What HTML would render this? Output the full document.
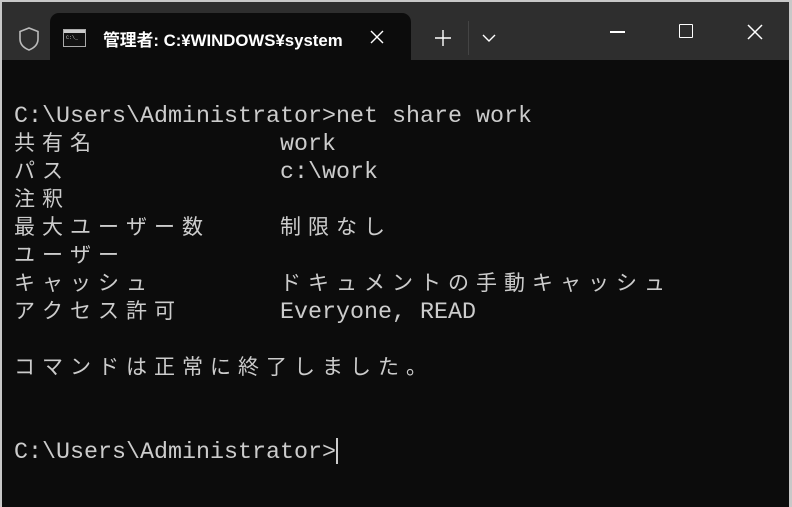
<!DOCTYPE html>
<html><head><meta charset="utf-8"><style>
html,body{margin:0;padding:0;width:792px;height:507px;overflow:hidden;background:#c8c8c8}
.win{position:absolute;left:2px;top:2px;width:787px;height:505px;background:#0c0c0c}
.title{position:absolute;left:0;top:0;width:787px;height:58px;background:#2e2e2e}
.tab{position:absolute;left:48px;top:11px;width:361px;height:49px;background:#0c0c0c;border-radius:9px 9px 0 0}
.tt{position:absolute;left:101px;top:25px;color:#fff;font:600 16.8px "Liberation Sans","Noto Sans CJK JP",sans-serif;white-space:nowrap}
.term{position:absolute;left:14px;top:103px;color:#cccccc;font:23.33px/28px "Liberation Mono","Noto Sans CJK JP",monospace}
.term div{height:28px;white-space:pre}
.term i{font-style:normal;display:inline-block;width:28px;font-size:21px}
.cur{position:absolute;left:336px;top:438px;width:1.5px;height:26px;background:#ccc}
</style></head><body>
<div class="win">
<div class="title"></div>
<svg style="position:absolute;left:15px;top:24px" width="24" height="26" viewBox="0 0 24 26"><path d="M12 2 L21 5.5 V13 C21 19 17 22 12 24 C7 22 3 19 3 13 V5.5 Z" fill="none" stroke="#bbb" stroke-width="1.6"/></svg>
<div class="tab"></div>
<svg style="position:absolute;left:61px;top:27px" width="24" height="19"><rect x="0.5" y="0.5" width="22" height="17" fill="#111" stroke="#aaa"/><rect x="1" y="1" width="21" height="3" fill="#ccc"/><text x="3" y="10" font-size="5" fill="#ccc" font-family="Liberation Mono">C:\_</text></svg>
<div class="tt">管理者: C:¥WINDOWS¥system</div>
<svg style="position:absolute;left:368px;top:28px" width="14" height="14"><path d="M1 1L13 13M13 1L1 13" stroke="#fff" stroke-width="1.4"/></svg>
<svg style="position:absolute;left:432px;top:27px" width="18" height="18"><path d="M9 1V17M1 9H17" stroke="#fff" stroke-width="1.4"/></svg>
<div style="position:absolute;left:466px;top:19px;width:1px;height:34px;background:#444"></div>
<svg style="position:absolute;left:480px;top:32px" width="14" height="9"><path d="M1 1L7 7L13 1" stroke="#fff" stroke-width="1.4" fill="none"/></svg>
<div style="position:absolute;left:608px;top:29px;width:15px;height:2px;background:#fff"></div>
<div style="position:absolute;left:677px;top:22px;width:12px;height:12px;border:1.5px solid #fff;border-radius:1px"></div>
<svg style="position:absolute;left:745px;top:22px" width="16" height="16"><path d="M1 1L15 15M15 1L1 15" stroke="#fff" stroke-width="1.5"/></svg>
</div>
<div class="term"><div>C:\Users\Administrator&gt;net share work</div><div><i>共</i><i>有</i><i>名</i>             work</div><div><i>パ</i><i>ス</i>               c:\work</div><div><i>注</i><i>釈</i></div><div><i>最</i><i>大</i><i>ユ</i><i>ー</i><i>ザ</i><i>ー</i><i>数</i>     <i>制</i><i>限</i><i>な</i><i>し</i></div><div><i>ユ</i><i>ー</i><i>ザ</i><i>ー</i></div><div><i>キ</i><i>ャ</i><i>ッ</i><i>シ</i><i>ュ</i>         <i>ド</i><i>キ</i><i>ュ</i><i>メ</i><i>ン</i><i>ト</i><i>の</i><i>手</i><i>動</i><i>キ</i><i>ャ</i><i>ッ</i><i>シ</i><i>ュ</i></div><div><i>ア</i><i>ク</i><i>セ</i><i>ス</i><i>許</i><i>可</i>       Everyone, READ</div><div></div><div><i>コ</i><i>マ</i><i>ン</i><i>ド</i><i>は</i><i>正</i><i>常</i><i>に</i><i>終</i><i>了</i><i>し</i><i>ま</i><i>し</i><i>た</i><i>。</i></div><div></div><div></div><div>C:\Users\Administrator&gt;</div></div>
<div class="cur"></div>
</body></html>
